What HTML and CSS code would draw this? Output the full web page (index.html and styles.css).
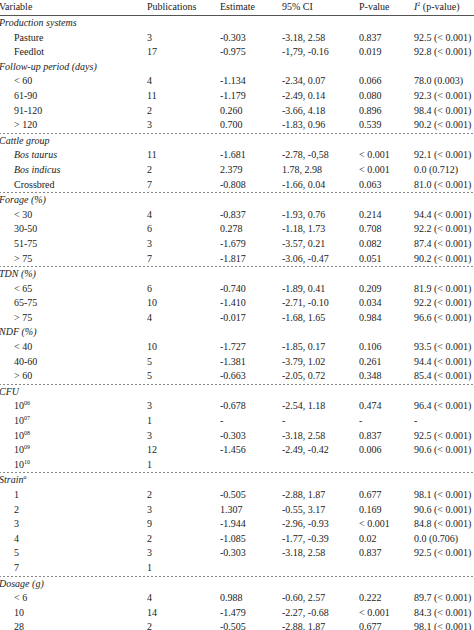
FILE: index.html
```html
<!DOCTYPE html>
<html lang="en">
<head>
    <meta charset="UTF-8">
    <meta name="viewport" content="width=device-width, initial-scale=1.0">
    <title>Subgroup analysis</title>
    <link rel="stylesheet" href="styles.css">
</head>
<body>
    <table class="results">
        <colgroup>
            <col class="c-var">
            <col class="c-pub">
            <col class="c-est">
            <col class="c-ci">
            <col class="c-p">
            <col class="c-i2">
        </colgroup>
        <thead>
            <tr>
                <th>Variable</th>
                <th>Publications</th>
                <th>Estimate</th>
                <th>95% CI</th>
                <th>P-value</th>
                <th><i>I</i><sup>2</sup> (p-value)</th>
            </tr>
        </thead>
        <tbody>
            <tr class="group"><td colspan="6">Production systems</td></tr>
            <tr><td class="sub">Pasture</td><td>3</td><td>-0.303</td><td>-3.18, 2.58</td><td>0.837</td><td>92.5 (&lt; 0.001)</td></tr>
            <tr><td class="sub">Feedlot</td><td>17</td><td>-0.975</td><td>-1,79, -0.16</td><td>0.019</td><td>92.8 (&lt; 0.001)</td></tr>

            <tr class="group"><td colspan="6">Follow-up period (days)</td></tr>
            <tr><td class="sub">&lt; 60</td><td>4</td><td>-1.134</td><td>-2.34, 0.07</td><td>0.066</td><td>78.0 (0.003)</td></tr>
            <tr><td class="sub">61-90</td><td>11</td><td>-1.179</td><td>-2.49, 0.14</td><td>0.080</td><td>92.3 (&lt; 0.001)</td></tr>
            <tr><td class="sub">91-120</td><td>2</td><td>0.260</td><td>-3.66, 4.18</td><td>0.896</td><td>98.4 (&lt; 0.001)</td></tr>
            <tr><td class="sub">&gt; 120</td><td>3</td><td>0.700</td><td>-1.83, 0.96</td><td>0.539</td><td>90.2 (&lt; 0.001)</td></tr>

            <tr class="group sep"><td colspan="6">Cattle group</td></tr>
            <tr><td class="sub"><i>Bos taurus</i></td><td>11</td><td>-1.681</td><td>-2.78, -0,58</td><td>&lt; 0.001</td><td>92.1 (&lt; 0.001)</td></tr>
            <tr><td class="sub"><i>Bos indicus</i></td><td>2</td><td>2.379</td><td>1.78, 2.98</td><td>&lt; 0.001</td><td>0.0 (0.712)</td></tr>
            <tr><td class="sub">Crossbred</td><td>7</td><td>-0.808</td><td>-1.66, 0.04</td><td>0.063</td><td>81.0 (&lt; 0.001)</td></tr>

            <tr class="group sep"><td colspan="6">Forage (%)</td></tr>
            <tr><td class="sub">&lt; 30</td><td>4</td><td>-0.837</td><td>-1.93, 0.76</td><td>0.214</td><td>94.4 (&lt; 0.001)</td></tr>
            <tr><td class="sub">30-50</td><td>6</td><td>0.278</td><td>-1.18, 1.73</td><td>0.708</td><td>92.2 (&lt; 0.001)</td></tr>
            <tr><td class="sub">51-75</td><td>3</td><td>-1.679</td><td>-3.57, 0.21</td><td>0.082</td><td>87.4 (&lt; 0.001)</td></tr>
            <tr><td class="sub">&gt; 75</td><td>7</td><td>-1.817</td><td>-3.06, -0.47</td><td>0.051</td><td>90.2 (&lt; 0.001)</td></tr>

            <tr class="group sep"><td colspan="6">TDN (%)</td></tr>
            <tr><td class="sub">&lt; 65</td><td>6</td><td>-0.740</td><td>-1.89, 0.41</td><td>0.209</td><td>81.9 (&lt; 0.001)</td></tr>
            <tr><td class="sub">65-75</td><td>10</td><td>-1.410</td><td>-2.71, -0.10</td><td>0.034</td><td>92.2 (&lt; 0.001)</td></tr>
            <tr><td class="sub">&gt; 75</td><td>4</td><td>-0.017</td><td>-1.68, 1.65</td><td>0.984</td><td>96.6 (&lt; 0.001)</td></tr>

            <tr class="group"><td colspan="6">NDF (%)</td></tr>
            <tr><td class="sub">&lt; 40</td><td>10</td><td>-1.727</td><td>-1.85, 0.17</td><td>0.106</td><td>93.5 (&lt; 0.001)</td></tr>
            <tr><td class="sub">40-60</td><td>5</td><td>-1.381</td><td>-3.79, 1.02</td><td>0.261</td><td>94.4 (&lt; 0.001)</td></tr>
            <tr><td class="sub">&gt; 60</td><td>5</td><td>-0.663</td><td>-2.05, 0.72</td><td>0.348</td><td>85.4 (&lt; 0.001)</td></tr>

            <tr class="group sep"><td colspan="6">CFU</td></tr>
            <tr><td class="sub">10<sup>06</sup></td><td>3</td><td>-0.678</td><td>-2.54, 1.18</td><td>0.474</td><td>96.4 (&lt; 0.001)</td></tr>
            <tr><td class="sub">10<sup>07</sup></td><td>1</td><td>-</td><td>-</td><td>-</td><td>-</td></tr>
            <tr><td class="sub">10<sup>08</sup></td><td>3</td><td>-0.303</td><td>-3.18, 2.58</td><td>0.837</td><td>92.5 (&lt; 0.001)</td></tr>
            <tr><td class="sub">10<sup>09</sup></td><td>12</td><td>-1.456</td><td>-2.49, -0.42</td><td>0.006</td><td>90.6 (&lt; 0.001)</td></tr>
            <tr><td class="sub">10<sup>10</sup></td><td>1</td><td></td><td></td><td></td><td></td></tr>

            <tr class="group sep"><td colspan="6">Strain<sup>a</sup></td></tr>
            <tr><td class="sub">1</td><td>2</td><td>-0.505</td><td>-2.88, 1.87</td><td>0.677</td><td>98.1 (&lt; 0.001)</td></tr>
            <tr><td class="sub">2</td><td>3</td><td>1.307</td><td>-0.55, 3.17</td><td>0.169</td><td>90.6 (&lt; 0.001)</td></tr>
            <tr><td class="sub">3</td><td>9</td><td>-1.944</td><td>-2.96, -0.93</td><td>&lt; 0.001</td><td>84.8 (&lt; 0.001)</td></tr>
            <tr><td class="sub">4</td><td>2</td><td>-1.085</td><td>-1.77, -0.39</td><td>0.02</td><td>0.0 (0.706)</td></tr>
            <tr><td class="sub">5</td><td>3</td><td>-0.303</td><td>-3.18, 2.58</td><td>0.837</td><td>92.5 (&lt; 0.001)</td></tr>
            <tr><td class="sub">7</td><td>1</td><td></td><td></td><td></td><td></td></tr>

            <tr class="group sep"><td colspan="6">Dosage (g)</td></tr>
            <tr><td class="sub">&lt; 6</td><td>4</td><td>0.988</td><td>-0.60, 2.57</td><td>0.222</td><td>89.7 (&lt; 0.001)</td></tr>
            <tr><td class="sub">10</td><td>14</td><td>-1.479</td><td>-2.27, -0.68</td><td>&lt; 0.001</td><td>84.3 (&lt; 0.001)</td></tr>
            <tr><td class="sub">28</td><td>2</td><td>-0.505</td><td>-2.88, 1.87</td><td>0.677</td><td>98.1 (&lt; 0.001)</td></tr>
        </tbody>
    </table>
</body>
</html>
```

FILE: styles.css
```css
/* Base styling */
html,
body {
    margin: 0;
    padding: 0;
    background-color: #ffffff;
    overflow: hidden;
}

body {
    font-family: "Liberation Serif", "Times New Roman", serif;
    font-size: 10px;
    color: #222;
}

/* Table */
.results {
    border-collapse: collapse;
    table-layout: fixed;
    width: 494px;
    margin-left: -1px;
}

.c-var { width: 148px; }
.c-pub { width: 73px; }
.c-est { width: 62px; }
.c-ci  { width: 77px; }
.c-p   { width: 55px; }
.c-i2  { width: 79px; }

.results th,
.results td {
    padding: 0;
    text-align: left;
    font-weight: normal;
    white-space: nowrap;
    line-height: 14.6px;
    vertical-align: middle;
}

.results thead th {
    height: 15px;
    border-bottom: 1px solid #555;
}

.results sup {
    font-size: 6px;
    line-height: 0;
    vertical-align: 4px;
}

/* Rows */
.group td {
    font-style: italic;
}

.sub {
    padding-left: 15px !important;
}

.sep td {
    padding-top: 1px;
    background: repeating-linear-gradient(to right, #888 0 2px, transparent 2px 4px) top left / 100% 1px no-repeat;
}
```
